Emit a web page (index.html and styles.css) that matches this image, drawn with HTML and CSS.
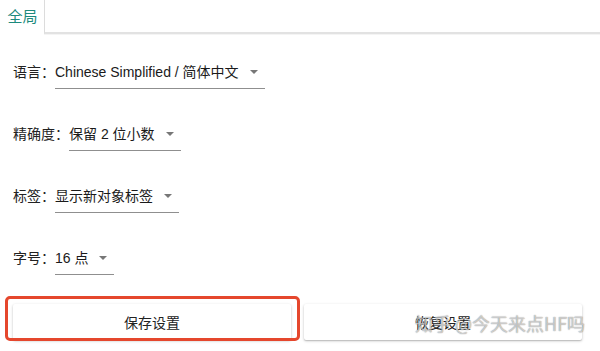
FILE: index.html
```html
<!DOCTYPE html>
<html lang="zh">
<head>
<meta charset="utf-8">
<link rel="stylesheet" href="styles.css">
</head>
<body>
<div class="page">
  <div class="tabs">
    <div class="tab active">全局</div>
    <div class="tab-rest"></div>
  </div>
  <div class="form">
    <div class="row">
      <span class="label">语言：</span>
      <div class="select"><span>Chinese Simplified / 简体中文</span><i class="arrow"></i></div>
    </div>
    <div class="row">
      <span class="label">精确度：</span>
      <div class="select"><span>保留 2 位小数</span><i class="arrow"></i></div>
    </div>
    <div class="row">
      <span class="label">标签：</span>
      <div class="select"><span>显示新对象标签</span><i class="arrow"></i></div>
    </div>
    <div class="row">
      <span class="label">字号：</span>
      <div class="select"><span>16 点</span><i class="arrow"></i></div>
    </div>
  </div>
  <div class="actions">
    <button class="btn">保存设置</button>
    <button class="btn">恢复设置</button>
  </div>
  <div class="highlight"></div>
  <div class="watermark">知乎 @今天来点HF吗</div>
</div>
</body>
</html>
```
FILE: styles.css
```css
html, body {
  margin: 0;
  padding: 0;
  background: #fff;
}
.page {
  position: relative;
  width: 600px;
  height: 351px;
  overflow: hidden;
  font-family: "Liberation Sans", "Noto Sans CJK SC", sans-serif;
  color: #222;
}
.tabs {
  display: flex;
  height: 34px;
}
.tab {
  width: 44px;
  box-sizing: border-box;
  font-size: 15px;
  line-height: 20px;
  padding-top: 7px;
  padding-left: 1px;
  text-align: center;
  color: #1d8a7d;
}
.tab-rest {
  flex: 1;
  border-left: 1px solid #dcdcdc;
  border-bottom: 2px solid #e2e2e2;
  box-shadow: 0 1px 0 #f4f4f4;
}
.form {
  padding-left: 13px;
  padding-top: 28px;
  display: flex;
  flex-direction: column;
  gap: 35px;
}
.row {
  display: flex;
  align-items: flex-start;
  font-size: 14px;
  line-height: 20px;
}
.label {
  color: #222;
}
.select {
  position: relative;
  padding: 0 26px 6px 0;
  border-bottom: 1px solid #8f8f8f;
  color: #1a1a1a;
}
.arrow {
  position: absolute;
  right: 7px;
  top: 8px;
  width: 0;
  height: 0;
  border-left: 4px solid transparent;
  border-right: 4px solid transparent;
  border-top: 4px solid #777;
}
.actions {
  display: flex;
  gap: 13px;
  padding-left: 13px;
  margin-top: 29px;
}
.btn {
  width: 278px;
  height: 36px;
  border: none;
  border-radius: 2px;
  background: #fff;
  font-family: "Liberation Sans", "Noto Sans CJK SC", sans-serif;
  font-size: 14px;
  color: #222;
  box-shadow: 0 1px 3px rgba(0,0,0,0.22), 0 1px 1px rgba(0,0,0,0.12);
}
.highlight {
  position: absolute;
  left: 5px;
  top: 296px;
  width: 289px;
  height: 39px;
  border: 3px solid #e5472d;
  border-radius: 5px;
}
.watermark {
  position: absolute;
  left: 415px;
  top: 312px;
  font-family: "Noto Sans CJK SC", sans-serif;
  font-size: 18px;
  line-height: 22px;
  color: rgba(255,255,255,0.6);
  text-shadow: 0 0 1px rgba(0,0,0,0.6);
  white-space: nowrap;
}
```
